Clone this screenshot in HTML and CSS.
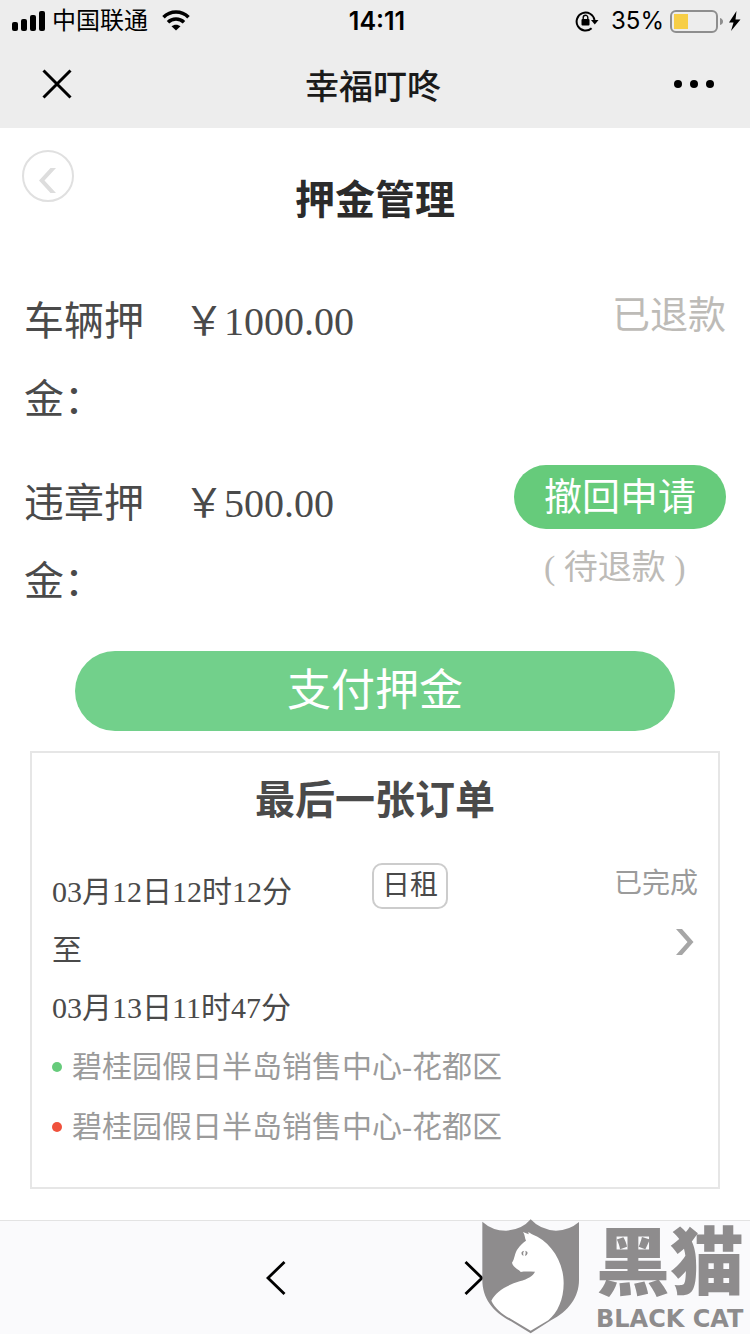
FILE: index.html
```html
<!DOCTYPE html>
<html lang="zh-CN">
<head>
    <meta charset="UTF-8">
    <meta name="viewport" content="width=device-width, initial-scale=1.0">
    <title>幸福叮咚</title>
    <link rel="stylesheet" href="styles.css">
</head>
<body>
    <!-- Top bars -->
    <header class="top">
        <div class="status-bar">
            <div class="status-left">
                <svg width="34" height="22" viewBox="0 0 34 22" aria-hidden="true">
                    <rect x="0" y="12" width="6" height="9" rx="2"/>
                    <rect x="9" y="9" width="6" height="12" rx="2"/>
                    <rect x="18" y="5" width="6" height="16" rx="2"/>
                    <rect x="27" y="1" width="6" height="20" rx="2"/>
                </svg>
                <span class="carrier">中国联通</span>
                <svg class="wifi" width="28" height="22" viewBox="0 0 28 22" aria-hidden="true">
                    <path d="M1.5 7.2C8.5.3 19.5.3 26.5 7.2M6 12.2C10.5 8 17.5 8 22 12.2" fill="none" stroke="#000" stroke-width="3.6"/>
                    <path d="M14 20.500 9.500 16.300C12 14.200 16 14.200 18.500 16.300Z"/>
                </svg>
            </div>
            <span class="clock">14:11</span>
            <div class="status-right">
                <svg width="24" height="22" viewBox="0 0 24 22" aria-hidden="true">
                    <path d="M16.600 18.300A9 9 0 1 1 19.500 10" fill="none" stroke="#000" stroke-width="2"/>
                    <path d="M16 10h7.500l-3.700 4.500z"/>
                    <rect x="6.500" y="9" width="8" height="6.500" rx="1"/>
                    <path d="M8.200 9.500V7.500a2.300 2.300 0 0 1 4.600 0v2" fill="none" stroke="#000" stroke-width="1.400"/>
                </svg>
                <span class="percent">35%</span>
                <svg width="72" height="24" viewBox="0 0 72 24" aria-hidden="true">
                    <rect x="1" y="2" width="46" height="21" rx="5" fill="none" stroke="#8e8e8e" stroke-width="2"/>
                    <rect x="4" y="5" width="14" height="15" fill="#f7ce46"/>
                    <path d="M50 9q3 1 3 3.500t-3 3.500z" fill="#8e8e8e"/>
                    <path d="M66.500 2 59 13.500h4.500L61 22l9.500-11.500h-5z"/>
                </svg>
            </div>
        </div>
        <nav class="nav-bar">
            <button class="icon-button" aria-label="关闭">
                <svg width="30" height="30" viewBox="0 0 30 30"><path d="M1.500 1.500l27 27M28.500 1.500l-27 27" fill="none" stroke="#000" stroke-width="3"/></svg>
            </button>
            <span class="nav-title">幸福叮咚</span>
            <button class="icon-button more" aria-label="更多">
                <svg width="40" height="10" viewBox="0 0 40 10"><circle cx="4" cy="5" r="4"/><circle cx="20" cy="5" r="4"/><circle cx="36" cy="5" r="4"/></svg>
            </button>
        </nav>
    </header>

    <main class="container">
        <div class="page-head">
            <button class="back-button" aria-label="返回">
                <svg width="18" height="26" viewBox="0 0 18 26"><path d="M11.500 0H17L5.500 12.500 17 25h-5.500L0 12.500z" fill="#ddd"/></svg>
            </button>
            <h1>押金管理</h1>
        </div>

        <!-- Deposits -->
        <section class="deposits">
            <div class="deposit">
                <span class="deposit-label">车辆押金：</span>
                <span class="deposit-amount">￥1000.00</span>
                <div class="deposit-state">
                    <span class="refunded">已退款</span>
                </div>
            </div>
            <div class="deposit">
                <span class="deposit-label">违章押金：</span>
                <span class="deposit-amount">￥500.00</span>
                <div class="deposit-state">
                    <button class="revoke-button">撤回申请</button>
                    <span class="pending">( 待退款 )</span>
                </div>
            </div>
        </section>

        <button class="pay-button">支付押金</button>

        <!-- Last order -->
        <section class="order">
            <h2>最后一张订单</h2>
            <div class="order-info">
                <div class="order-times">
                    <div>03月12日12时12分</div>
                    <div>至</div>
                    <div>03月13日11时47分</div>
                </div>
                <span class="order-type">日租</span>
                <div class="order-state">
                    <span>已完成</span>
                    <a href="#" class="order-link" aria-label="查看订单">
                        <svg width="18" height="26" viewBox="0 0 18 26"><path d="M0 0h6l11.500 13L6 26H0l11.500-13z" fill="#a6a6a6"/></svg>
                    </a>
                </div>
            </div>
            <ul class="places">
                <li class="place start">碧桂园假日半岛销售中心-花都区</li>
                <li class="place end">碧桂园假日半岛销售中心-花都区</li>
            </ul>
        </section>
    </main>

    <footer class="toolbar">
        <button class="icon-button" aria-label="后退">
            <svg width="20" height="34" viewBox="0 0 20 34"><path d="M18.500 1 2 17l16.500 16" fill="none" stroke="#000" stroke-width="2.800"/></svg>
        </button>
        <button class="icon-button" aria-label="前进">
            <svg width="20" height="34" viewBox="0 0 20 34"><path d="M1.500 1 18 17 1.500 33" fill="none" stroke="#000" stroke-width="2.800"/></svg>
        </button>
        <div class="brand">
            <svg width="98" height="115" viewBox="63 57 294 345" aria-hidden="true">
                <path d="M64 65Q94 92 135 92Q182 90 209 58Q238 90 285 92Q325 91 354 66V240C354 292 322 334 270 361L209 400L150 364C95 336 64 294 64 240Z" fill="#8e8c8d"/>
                <path d="M186 96L203 103L202 96L213 103C267 124 308 182 308 250C308 298 290 338 262 361L209 392L150 357C122 342 102 325 91 302C105 274 137 256 176 244C202 236 216 228 222 215C207 215 193 213 179 216C176 209 156 203 153 188C161 178 161 158 170 147C177 136 187 127 195 122C191 113 192 104 186 96Z" fill="#fff"/>
                <path d="M181 158Q184 152 190 152Q184 158 188 167Q181 166 181 158ZM193 152Q200 154 200 159Q198 167 192 168Q196 159 193 152Z" fill="#8e8c8d"/>
            </svg>
            <div class="brand-text">
                <span class="brand-cn">黑猫</span>
                <span class="brand-en">BLACK CAT</span>
            </div>
        </div>
    </footer>
</body>
</html>
```
FILE: styles.css
```css
* {
    box-sizing: border-box;
}

body {
    font-family: "Liberation Serif", "Noto Sans CJK SC", serif;
    margin: 0;
    min-height: 100vh;
    display: flex;
    flex-direction: column;
    background-color: #fff;
    color: #4a4a4a;
}

button {
    font-family: inherit;
    border: none;
    padding: 0;
    cursor: pointer;
}

svg {
    display: block;
}

.top {
    background-color: #ededed;
    color: #000;
    font-family: Inter, "Noto Sans CJK SC", sans-serif;
}

.status-bar {
    display: grid;
    grid-template-columns: 1fr auto 1fr;
    align-items: center;
    height: 40px;
    padding: 0 8px 0 12px;
    font-size: 24px;
    line-height: 42px;
}

.status-left,
.status-right {
    display: flex;
    align-items: center;
}

.status-right {
    justify-content: flex-end;
}

.carrier {
    margin: 0 14px 0 6px;
}

.clock {
    font-size: 25px;
    font-weight: 600;
}

.percent {
    margin: 0 6px 0 12px;
}

.nav-bar {
    display: flex;
    align-items: center;
    justify-content: space-between;
    height: 88px;
    padding: 0 36px 0 42px;
}

.nav-title {
    font-size: 34px;
    font-weight: 500;
    color: #1a1a1a;
}

.icon-button {
    background: none;
}

.container {
    flex: 1;
    padding: 22px 0 31px;
}

.page-head {
    display: grid;
    grid-template-columns: 52px 1fr 52px;
    height: 133px;
    padding: 0 22px;
}

.back-button {
    display: flex;
    align-items: center;
    justify-content: center;
    width: 52px;
    height: 52px;
    padding-top: 10px;
    border: 2px solid #e0e0e0;
    border-radius: 50%;
    background: none;
}

h1,
h2 {
    margin: 0;
    font-size: 40px;
    text-align: center;
}

h1 {
    line-height: 102px;
    color: #2b2b2b;
}

.deposits {
    padding: 0 24px 4px;
}

.deposit {
    display: flex;
    align-items: flex-start;
    margin-bottom: 26px;
    font-size: 40px;
    line-height: 78px;
}

.deposit-label {
    width: 120px;
    margin-right: 40px;
}

.deposit-state {
    display: flex;
    flex-direction: column;
    margin-left: auto;
    color: #bdbbb7;
}

.refunded {
    font-size: 38px;
    line-height: 64px;
}

.revoke-button {
    height: 64px;
    padding: 0 30px;
    border-radius: 32px;
    background-color: #66cb7b;
    color: #fff;
    font-size: 38px;
    line-height: 64px;
}

.pending {
    padding-left: 30px;
    font-size: 34px;
}

.pay-button {
    display: block;
    width: 80%;
    height: 80px;
    margin: 0 auto 20px;
    padding-top: 2px;
    border-radius: 40px;
    background-color: #72d08b;
    color: #fff;
    font-size: 44px;
    line-height: 78px;
}

.order {
    margin: 0 30px;
    padding: 0 20px 30px;
    border: 2px solid #e6e6e6;
}

.order h2 {
    line-height: 96px;
}

.order-info {
    display: grid;
    grid-template-columns: 320px 1fr auto;
    align-items: start;
    padding-top: 14px;
    font-size: 30px;
    line-height: 58px;
}

.order-type {
    justify-self: start;
    padding: 0 8px;
    border: 2px solid #ccc;
    border-radius: 10px;
    font-size: 28px;
    line-height: 42px;
}

.order-state {
    display: flex;
    flex-direction: column;
    align-items: flex-end;
    color: #9b9b9b;
    font-size: 28px;
    line-height: 42px;
}

.order-link {
    padding: 24px 4px;
}

.places {
    margin: 0;
    padding: 0;
    list-style: none;
    color: #9b9b9b;
    font-size: 30px;
    line-height: 60px;
}

.place {
    display: flex;
    align-items: center;
    gap: 10px;
}

.place::before {
    content: "";
    width: 10px;
    height: 10px;
    border-radius: 50%;
}

.start::before {
    background-color: #66cb7b;
}

.end::before {
    background-color: #f0513c;
}

.toolbar {
    position: relative;
    display: flex;
    align-items: center;
    justify-content: center;
    gap: 178px;
    height: 114px;
    border-top: 1px solid #e3e3e3;
    background-color: #fafafc;
}

/* Brand mark lies over the toolbar corner */
.brand {
    position: absolute;
    right: 6px;
    bottom: 0;
    display: flex;
    align-items: flex-end;
    gap: 16px;
    color: #8e8c8d;
}

.brand-text {
    display: flex;
    flex-direction: column;
    font-weight: 700;
}

.brand-cn {
    font-family: "Liberation Sans", "Noto Sans CJK SC", sans-serif;
    font-size: 74px;
    font-weight: 900;
    line-height: 80px;
}

.brand-en {
    font-family: "DejaVu Sans", sans-serif;
    font-size: 24px;
    line-height: 30px;
}
```
